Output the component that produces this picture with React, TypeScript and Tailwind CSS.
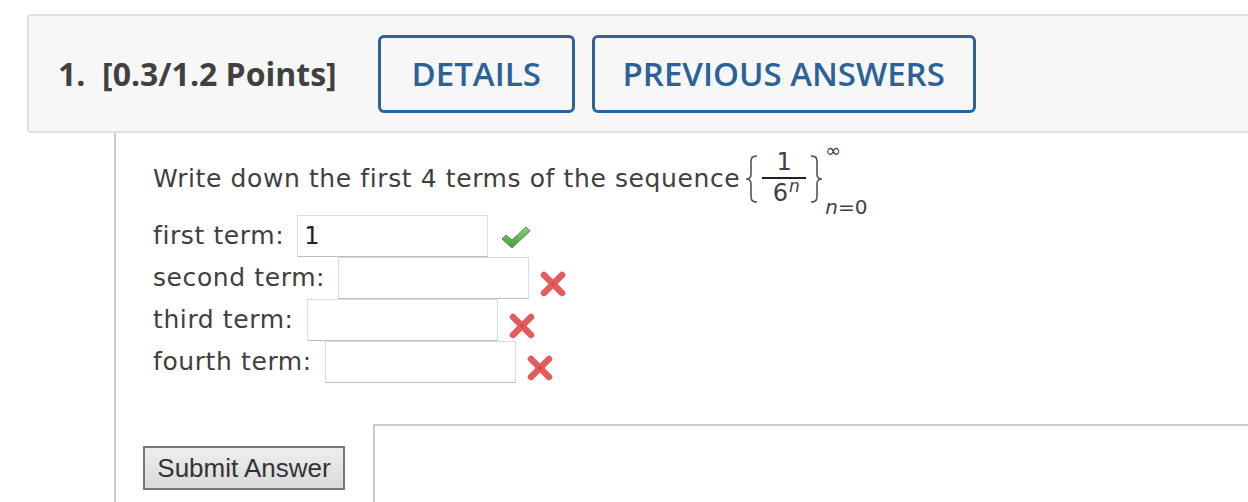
import React from 'react';

function CheckMark() {
    return (
        <svg width="32" height="26" viewBox="0 0 32 26" className="shrink-0">
            <defs>
                <linearGradient id="chk" x1="0" y1="0" x2="0" y2="1">
                    <stop offset="0" stopColor="#8fd07e" />
                    <stop offset="1" stopColor="#3f9a3a" />
                </linearGradient>
            </defs>
            <path d="M2 14 L6 10 L12 15 L26 2 L30 6 L12 23 Z" fill="url(#chk)" stroke="#4c9a45" strokeWidth="1" strokeLinejoin="round" />
        </svg>
    );
}

function CrossMark() {
    return (
        <svg width="30" height="30" viewBox="0 0 30 30" className="shrink-0">
            <g stroke="#e55a5a" strokeWidth="6.5" strokeLinecap="round">
                <path d="M6 6 L24 24" />
                <path d="M24 6 L6 24" />
            </g>
            <circle cx="15" cy="15" r="2" fill="#d84a4a" />
        </svg>
    );
}

function Brace({ flip }: { flip?: boolean }) {
    return (
        <svg width="16" height="50" viewBox="0 0 16 50" className={flip ? '-scale-x-100' : ''}>
            <path d="M13 2 C7 2 7 5 7 9 L7 20 C7 23 5 25 2 25 C5 25 7 27 7 30 L7 41 C7 45 7 48 13 48" fill="none" stroke="#555" strokeWidth="1.6" />
        </svg>
    );
}

function TermRow({ label, value, ok }: { label: string; value?: string; ok: boolean }) {
    return (
        <div className="flex items-center h-[42px]">
            <span>{label}</span>
            <input
                type="text"
                defaultValue={value}
                className="ml-[13px] w-[191px] h-[42px] border border-[#dcdcdc] border-b-[#bdbdbd] bg-white px-[6px] text-[24px] text-[#222] outline-none font-['DejaVu_Sans',sans-serif]"
            />
            {ok ? (
                <div className="ml-[12px] mt-[4px]"><CheckMark /></div>
            ) : (
                <div className="ml-[9px] mt-[12px]"><CrossMark /></div>
            )}
        </div>
    );
}

export default function App() {
    return (
        <div className="w-[1248px] h-[502px] overflow-hidden bg-white">
            <div className="pt-[14px] pl-[27px]">
                <div className="w-[1240px] h-[119px] bg-[#f7f7f7] border-2 border-[#e0e0e0] rounded-[4px] flex items-center pl-[29px]">
                    <h1 className="font-['Open_Sans',sans-serif] font-bold text-[32px] text-[#404040] whitespace-pre">
                        1.  [0.3/1.2 Points]
                    </h1>
                    <button className="ml-[41px] w-[197px] h-[78px] border-[3px] border-[#2b6297] rounded-[6px] text-[#2b6297] font-['Open_Sans',sans-serif] font-semibold text-[33px] bg-[#f7f7f7]">
                        DETAILS
                    </button>
                    <button className="ml-[17px] w-[384px] h-[78px] border-[3px] border-[#2b6297] rounded-[6px] text-[#2b6297] font-['Open_Sans',sans-serif] font-semibold text-[33px] bg-[#f7f7f7]">
                        PREVIOUS ANSWERS
                    </button>
                </div>
            </div>
            <div className="ml-[114px] border-l-2 border-[#cccccc] h-[370px] pl-[37px] pt-[6px] font-['DejaVu_Sans',Verdana,sans-serif] text-[25px] tracking-[0.6px] text-[#404040]">
                <div className="flex items-center h-[80px]">
                    <span>Write down the first 4 terms of the sequence</span>
                    <div className="ml-[4px] flex items-center tracking-normal">
                        <Brace />
                        <div className="flex flex-col items-center mx-[2px] text-[24px]">
                            <span className="leading-[26px] px-[4px]">1</span>
                            <span className="w-[44px] h-[2px] bg-[#222] mt-[2px]" />
                            <span className="leading-[28px] pl-[4px]">
                                6<span className="italic text-[17px] relative top-[-9px] ml-[1px]">n</span>
                            </span>
                        </div>
                        <Brace flip />
                        <div className="flex flex-col justify-between h-[76px] ml-[1px]">
                            <span className="leading-none text-[19px]">∞</span>
                            <span className="leading-none text-[20px]"><i>n</i>=0</span>
                        </div>
                    </div>
                </div>
                <div className="mt-[-4px]">
                    <TermRow label="first term:" value="1" ok />
                    <TermRow label="second term:" ok={false} />
                    <TermRow label="third term:" ok={false} />
                    <TermRow label="fourth term:" ok={false} />
                </div>
                <div className="flex mt-[41px] -ml-[10px]">
                    <button className="mt-[22px] w-[202px] h-[44px] border-2 border-[#777] bg-gradient-to-b from-[#eeeeee] to-[#dadada] text-[#333] text-[26px] tracking-normal font-['Liberation_Sans',Arial,sans-serif] self-start">
                        Submit Answer
                    </button>
                    <div className="ml-[28px] flex-1 h-[100px] border-t-2 border-l-2 border-[#cccccc]" />
                </div>
            </div>
        </div>
    );
}
